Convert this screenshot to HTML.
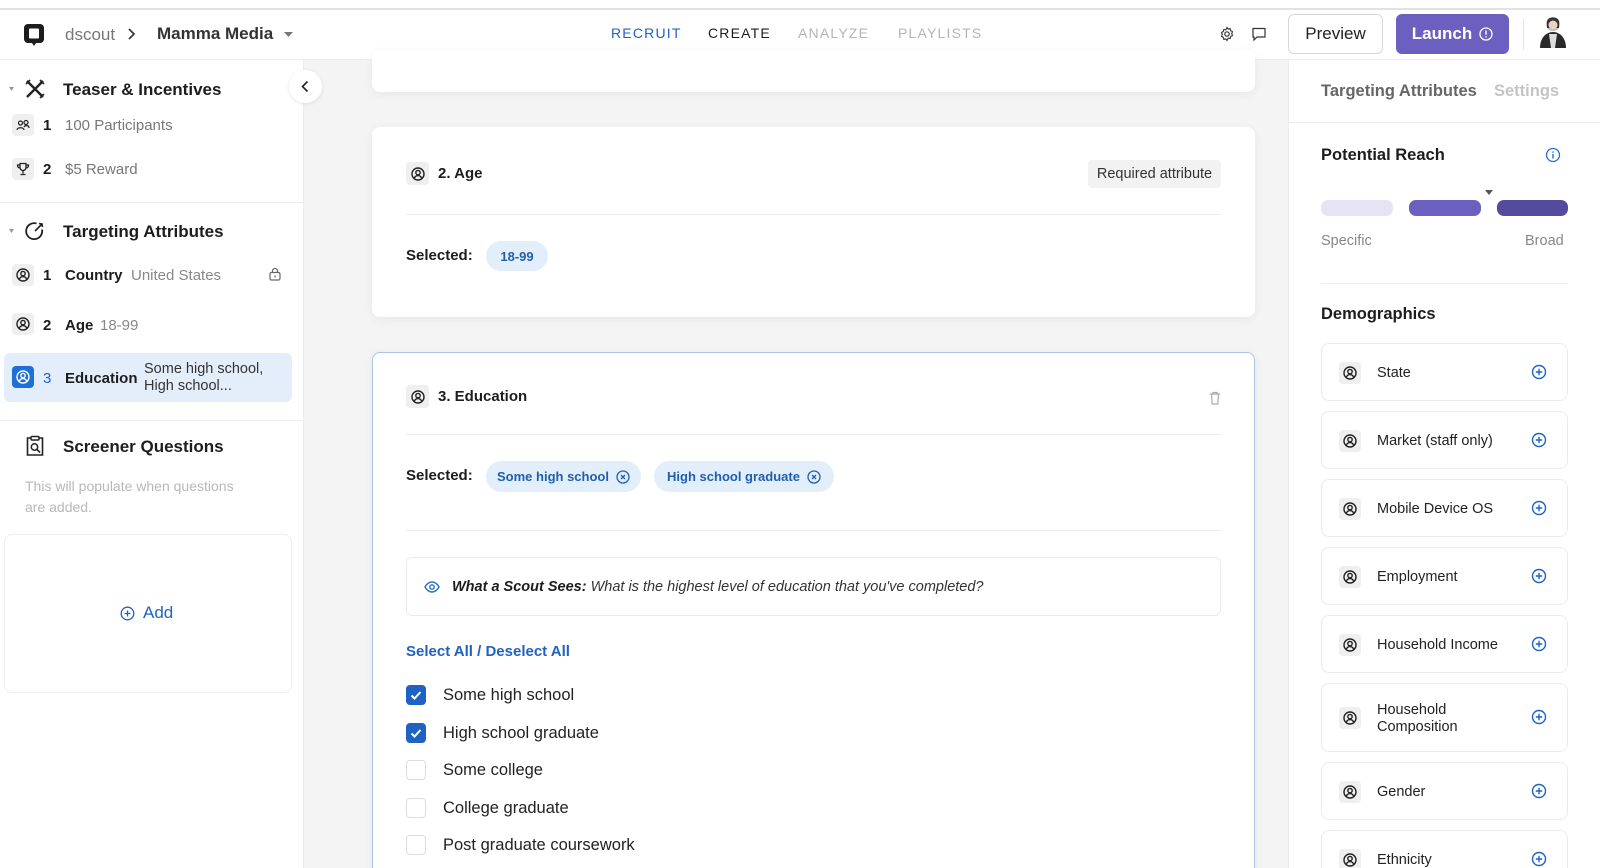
<!DOCTYPE html>
<html><head><meta charset="utf-8"><style>
*{box-sizing:border-box;margin:0;padding:0}
html,body{width:1600px;height:868px;overflow:hidden}
body{background:#f4f4f5;font-family:"Liberation Sans",Arial,sans-serif;color:#1d1d1f}
#r{position:relative;width:1600px;height:868px;overflow:hidden;background:#f4f4f5}
.a{position:absolute}
.hdr{left:0;width:1600px;background:#fff;border-top:2px solid #e2e2e2;border-bottom:1px solid #ececec;top:8px;height:52px}
.topstrip{left:0;top:0;width:1600px;height:8px;background:#fff}
.nav{font-size:14px;letter-spacing:1.2px;top:25px}
.side{left:0;top:60px;width:304px;height:830px;background:#fff;border-right:1px solid #ececec}
.right{left:1288px;top:60px;width:312px;height:830px;background:#fff;border-left:1px solid #ececec}
.card{background:#fff;border-radius:8px;box-shadow:0 2px 10px rgba(0,0,0,.06)}
.ib{width:22px;height:22px;border-radius:4px;background:#efefef;display:flex;align-items:center;justify-content:center}
.t15{font-size:15px}
.chip{background:#e3eefb;color:#1f5fae;border-radius:16px;font-size:13px;font-weight:bold;display:flex;align-items:center;justify-content:center;gap:7px}
.dc{left:1321px;width:247px;height:58px;border:1px solid #ececec;border-radius:8px;background:#fff}
.dc .ib{position:absolute;left:17px;top:18px}
.dc span{position:absolute;left:55px;font-size:14.5px;color:#222}
.dc svg.p{position:absolute;right:20px;top:20px}
.cb{width:20px;height:20px;border-radius:4px;border:1px solid #dcdcdc;left:406px;background:#fff}
.cb.on{background:#1f62c4;border-color:#1f62c4}
.cl{left:443px;font-size:16.5px;color:#222}
</style></head><body><div id="r">
<svg width="0" height="0" style="position:absolute"><defs>
<g id="u"><circle cx="7" cy="7" r="6" fill="none" stroke="#222" stroke-width="1.4"/><circle cx="7" cy="5.6" r="2.2" fill="none" stroke="#222" stroke-width="1.4"/><path d="M3.2 11.2c1-1.8 2.3-2.6 3.8-2.6s2.8.8 3.8 2.6" fill="none" stroke="#222" stroke-width="1.4"/></g>
<g id="pl"><circle cx="8" cy="8" r="6.5" fill="none" stroke="#1f62c4" stroke-width="1.4"/><path d="M8 4.8v6.4M4.8 8h6.4" stroke="#1f62c4" stroke-width="1.4"/></g>
</defs></svg>
<div class="a topstrip"></div>
<div class="a hdr"></div>
<svg class="a" style="left:23px;top:23px" width="22" height="24" viewBox="0 0 22 24"><rect x="1" y="1" width="20" height="19" rx="4" fill="#1d1d1f"/><rect x="6" y="5.5" width="10" height="10" rx="1" fill="#fff"/><path d="M9 20l2 3 2-3z" fill="#1d1d1f"/></svg>
<div class="a" style="left:65px;top:25px;font-size:17px;color:#777">dscout</div>
<svg class="a" style="left:127px;top:28px" width="10" height="12"><path d="M2 1l5 5-5 5" fill="none" stroke="#333" stroke-width="1.6"/></svg>
<div class="a" style="left:157px;top:24px;font-size:17px;font-weight:bold;color:#333">Mamma Media</div>
<svg class="a" style="left:284px;top:32px" width="10" height="6"><path d="M0 0h9L4.5 5z" fill="#777"/></svg>
<div class="a nav" style="left:611px;color:#1f62c4">RECRUIT</div>
<div class="a" style="left:611px;top:56px;width:68px;height:3px;background:#2a6fc9;border-radius:1px"></div>
<div class="a nav" style="left:708px;color:#1d1d1f">CREATE</div>
<div class="a nav" style="left:798px;color:#b5b5b5">ANALYZE</div>
<div class="a nav" style="left:898px;color:#b5b5b5">PLAYLISTS</div>
<svg class="a" style="left:1219px;top:26px" width="16" height="16" viewBox="0 0 16 16"><circle cx="8" cy="8" r="2.2" fill="none" stroke="#333" stroke-width="1.2"/><path d="M8 1.5l1.2 1.6 2-.4.5 2 1.8 1-.8 1.9.8 1.9-1.8 1-.5 2-2-.4L8 14.5l-1.2-1.6-2 .4-.5-2-1.8-1 .8-1.9-.8-1.9 1.8-1 .5-2 2 .4z" fill="none" stroke="#333" stroke-width="1.1"/></svg>
<svg class="a" style="left:1251px;top:26px" width="16" height="16" viewBox="0 0 16 16"><path d="M2 2.5h12v8.5H6l-3 3v-3H2z" fill="none" stroke="#333" stroke-width="1.2"/></svg>
<div class="a" style="left:1288px;top:14px;width:95px;height:40px;border:1px solid #d8d8d8;border-radius:6px;display:flex;align-items:center;justify-content:center;font-size:17px;color:#222">Preview</div>
<div class="a" style="left:1396px;top:14px;width:113px;height:40px;background:#6b5fbf;border-radius:6px;display:flex;align-items:center;justify-content:center;gap:7px;font-size:17px;color:#fff;font-weight:bold">Launch <svg width="14" height="14"><circle cx="7" cy="7" r="6" fill="none" stroke="#fff" stroke-width="1.3"/><path d="M7 3.5v4.2M7 9.3v1.2" stroke="#fff" stroke-width="1.4"/></svg></div>
<div class="a" style="left:1523px;top:18px;width:1px;height:32px;background:#e6e6e6"></div>
<svg class="a" style="left:1537px;top:14px" width="32" height="36" viewBox="0 0 32 36"><circle cx="16" cy="10" r="7" fill="#bbb"/><path d="M10 8c0-6 12-6 12 0v6H10z" fill="#333"/><circle cx="16" cy="11" r="4.5" fill="#e9d3c4"/><path d="M3 34c0-10 6-16 13-16s13 6 13 16z" fill="#2a2a2a"/><path d="M12 20h8l-2 14h-4z" fill="#ddd"/></svg>

<div class="a side"></div>
<svg class="a" style="left:9px;top:87px" width="6" height="5"><path d="M0 0h5L2.5 4z" fill="#999"/></svg>
<svg class="a" style="left:24px;top:78px" width="22" height="22" viewBox="0 0 22 22"><path d="M3 3l16 16M19 3L3 19" stroke="#222" stroke-width="2.4"/><path d="M2 6l4-4M16 20l4-4M16 2l4 4" stroke="#222" stroke-width="1.6"/></svg>
<div class="a" style="left:63px;top:80px;font-size:17px;font-weight:bold">Teaser &amp; Incentives</div>
<div class="a ib" style="left:12px;top:114px"><svg width="14" height="12"><circle cx="4.5" cy="4" r="2" fill="none" stroke="#222" stroke-width="1.2"/><circle cx="10" cy="3.5" r="2" fill="none" stroke="#222" stroke-width="1.2"/><path d="M1 11c0-3 7-3 7 0M8 8c1-2 5-2 5 1" fill="none" stroke="#222" stroke-width="1.2"/></svg></div>
<div class="a t15" style="left:43px;top:117px;font-weight:bold">1</div>
<div class="a t15" style="left:65px;top:117px;color:#777">100 Participants</div>
<div class="a ib" style="left:12px;top:158px"><svg width="14" height="14"><path d="M4 1.5h6v4a3 3 0 0 1-6 0zM4 3H1.5c0 2 1 3 2.5 3M10 3h2.5c0 2-1 3-2.5 3M7 8.5v3M4.5 12.5h5" fill="none" stroke="#222" stroke-width="1.3"/></svg></div>
<div class="a t15" style="left:43px;top:161px;font-weight:bold">2</div>
<div class="a t15" style="left:65px;top:161px;color:#777">$5 Reward</div>
<div class="a" style="left:0;top:202px;width:304px;height:1px;background:#ececec"></div>
<svg class="a" style="left:9px;top:229px" width="6" height="5"><path d="M0 0h5L2.5 4z" fill="#999"/></svg>
<svg class="a" style="left:24px;top:220px" width="22" height="22" viewBox="0 0 22 22"><path d="M18 9.5A8 8 0 1 1 12.5 3.5" fill="none" stroke="#222" stroke-width="1.8"/><path d="M11 11l7-7M15 3.5l3 .5.5 3" fill="none" stroke="#222" stroke-width="1.6"/></svg>
<div class="a" style="left:63px;top:222px;font-size:17px;font-weight:bold">Targeting Attributes</div>
<div class="a ib" style="left:12px;top:264px"><svg width="14" height="14"><use href="#u"/></svg></div>
<div class="a t15" style="left:43px;top:267px;font-weight:bold">1</div>
<div class="a t15" style="left:65px;top:267px;font-weight:bold">Country</div>
<div class="a t15" style="left:131px;top:267px;color:#888">United States</div>
<svg class="a" style="left:269px;top:267px" width="12" height="14"><rect x="1" y="5.5" width="10" height="7.5" rx="1.5" fill="none" stroke="#666" stroke-width="1.2"/><path d="M3.5 5.5V4a2.5 2.5 0 0 1 5 0v1.5M6 8.5v2" fill="none" stroke="#666" stroke-width="1.2"/></svg>
<div class="a ib" style="left:12px;top:313px"><svg width="14" height="14"><use href="#u"/></svg></div>
<div class="a t15" style="left:43px;top:317px;font-weight:bold">2</div>
<div class="a t15" style="left:65px;top:317px;font-weight:bold">Age</div>
<div class="a t15" style="left:100px;top:317px;color:#888">18-99</div>
<div class="a" style="left:4px;top:353px;width:288px;height:49px;background:#e4eefb;border-radius:6px"></div>
<div class="a ib" style="left:12px;top:366px;background:#1f6fd6"><svg width="14" height="14"><circle cx="7" cy="7" r="6" fill="none" stroke="#fff" stroke-width="1.4"/><circle cx="7" cy="5.6" r="2.2" fill="#1f6fd6" stroke="#fff" stroke-width="1.4"/><path d="M3.2 11.2c1-1.8 2.3-2.6 3.8-2.6s2.8.8 3.8 2.6" fill="#1f6fd6" stroke="#fff" stroke-width="1.4"/></svg></div>
<div class="a t15" style="left:43px;top:370px;color:#1f62c4">3</div>
<div class="a t15" style="left:65px;top:370px;font-weight:bold">Education</div>
<div class="a" style="left:144px;top:361px;font-size:14.5px;line-height:17px;color:#333">Some high school,<br>High school...</div>
<div class="a" style="left:0;top:420px;width:304px;height:1px;background:#ececec"></div>
<svg class="a" style="left:25px;top:435px" width="20" height="22" viewBox="0 0 20 22"><path d="M6 3H2.5v17h15V3H14" fill="none" stroke="#222" stroke-width="1.6"/><rect x="6" y="1.5" width="8" height="3.5" rx="1" fill="none" stroke="#222" stroke-width="1.5"/><circle cx="9.5" cy="12" r="3.2" fill="none" stroke="#222" stroke-width="1.5"/><path d="M12 14.5l3 3" stroke="#222" stroke-width="1.6"/></svg>
<div class="a" style="left:63px;top:437px;font-size:17px;font-weight:bold">Screener Questions</div>
<div class="a" style="left:25px;top:476px;font-size:14px;line-height:21px;color:#b8b8b8">This will populate when questions<br>are added.</div>
<div class="a" style="left:4px;top:534px;width:288px;height:159px;border:1px solid #eee;border-radius:8px;background:#fff"></div>
<div class="a" style="left:120px;top:603px;font-size:17px;color:#1f62c4;display:flex;align-items:center;gap:8px"><svg width="15" height="15"><circle cx="7.5" cy="7.5" r="6.3" fill="none" stroke="#1f62c4" stroke-width="1.3"/><path d="M7.5 4.5v6M4.5 7.5h6" stroke="#1f62c4" stroke-width="1.3"/></svg>Add</div>
<div class="a" style="left:289px;top:70px;width:33px;height:33px;border-radius:50%;background:#fff;box-shadow:0 1px 4px rgba(0,0,0,.1)"></div>
<svg class="a" style="left:301px;top:80px" width="8" height="13"><path d="M6.5 1.5L1.5 6.5l5 5" fill="none" stroke="#222" stroke-width="1.6"/></svg>

<div class="a card" style="left:372px;top:50px;width:883px;height:42px"></div>
<div class="a card" style="left:372px;top:127px;width:883px;height:190px"></div>
<div class="a ib" style="left:406px;top:162px;width:23px;height:23px"><svg width="14" height="14"><use href="#u"/></svg></div>
<div class="a" style="left:438px;top:165px;font-size:15px;font-weight:bold">2. Age</div>
<div class="a" style="left:1088px;top:160px;width:133px;height:28px;background:#f2f2f2;border-radius:4px;font-size:14.5px;color:#333;display:flex;align-items:center;justify-content:center">Required attribute</div>
<div class="a" style="left:406px;top:214px;width:815px;height:1px;background:#ececec"></div>
<div class="a" style="left:406px;top:247px;font-size:15px;font-weight:bold">Selected:</div>
<div class="a chip" style="left:486px;top:241px;width:62px;height:30px">18-99</div>

<div class="a card" style="left:372px;top:352px;width:883px;height:560px;border:1px solid #a9c6e8"></div>
<div class="a ib" style="left:406px;top:385px;width:23px;height:23px"><svg width="14" height="14"><use href="#u"/></svg></div>
<div class="a" style="left:438px;top:388px;font-size:15px;font-weight:bold">3. Education</div>
<svg class="a" style="left:1209px;top:391px" width="12" height="14"><path d="M1 3h10M4 3V1.5h4V3M2.5 3l.7 10h5.6l.7-10" fill="none" stroke="#aaa" stroke-width="1.2"/></svg>
<div class="a" style="left:406px;top:434px;width:815px;height:1px;background:#ececec"></div>
<div class="a" style="left:406px;top:467px;font-size:15px;font-weight:bold">Selected:</div>
<div class="a chip" style="left:486px;top:461px;width:155px;height:31px">Some high school <svg width="14" height="14"><circle cx="7" cy="7" r="6" fill="none" stroke="#1f5fae" stroke-width="1.3"/><path d="M5 5l4 4M9 5l-4 4" stroke="#1f5fae" stroke-width="1.3"/></svg></div>
<div class="a chip" style="left:654px;top:461px;width:180px;height:31px">High school graduate <svg width="14" height="14"><circle cx="7" cy="7" r="6" fill="none" stroke="#1f5fae" stroke-width="1.3"/><path d="M5 5l4 4M9 5l-4 4" stroke="#1f5fae" stroke-width="1.3"/></svg></div>
<div class="a" style="left:406px;top:530px;width:815px;height:1px;background:#ececec"></div>
<div class="a" style="left:406px;top:557px;width:815px;height:59px;border:1px solid #ececec;border-radius:6px"></div>
<svg class="a" style="left:424px;top:580px" width="16" height="14"><path d="M1 7c2-3.5 4.5-5 7-5s5 1.5 7 5c-2 3.5-4.5 5-7 5s-5-1.5-7-5z" fill="none" stroke="#2a6fc9" stroke-width="1.4"/><circle cx="8" cy="7" r="2.2" fill="none" stroke="#2a6fc9" stroke-width="1.4"/></svg>
<div class="a" style="left:452px;top:579px;font-size:14.5px;font-style:italic;color:#333"><b style="color:#1d1d1f">What a Scout Sees:</b> What is the highest level of education that you've completed?</div>
<div class="a" style="left:406px;top:643px;font-size:15px;font-weight:bold;color:#1f62c4">Select All / Deselect All</div>
<div class="a cb on" style="top:685px"><svg width="18" height="18"><path d="M4.5 9.5l3 3 6-6.5" fill="none" stroke="#fff" stroke-width="2"/></svg></div>
<div class="a cl" style="top:686px">Some high school</div>
<div class="a cb on" style="top:723px"><svg width="18" height="18"><path d="M4.5 9.5l3 3 6-6.5" fill="none" stroke="#fff" stroke-width="2"/></svg></div>
<div class="a cl" style="top:724px">High school graduate</div>
<div class="a cb" style="top:760px"></div>
<div class="a cl" style="top:761px">Some college</div>
<div class="a cb" style="top:798px"></div>
<div class="a cl" style="top:799px">College graduate</div>
<div class="a cb" style="top:835px"></div>
<div class="a cl" style="top:836px">Post graduate coursework</div>

<div class="a right"></div>
<div class="a" style="left:1321px;top:82px;font-size:16.5px;color:#666;font-weight:bold">Targeting Attributes</div>
<div class="a" style="left:1494px;top:82px;font-size:16.5px;color:#c4c4c4;font-weight:bold">Settings</div>
<div class="a" style="left:1288px;top:122px;width:312px;height:1px;background:#ececec"></div>
<div class="a" style="left:1321px;top:146px;font-size:16.5px;font-weight:bold;color:#1d1d1f">Potential Reach</div>
<svg class="a" style="left:1545px;top:147px" width="16" height="16"><circle cx="8" cy="8" r="6.5" fill="none" stroke="#2a6fc9" stroke-width="1.3"/><path d="M8 7v4.5M8 4.5v1.2" stroke="#2a6fc9" stroke-width="1.4"/></svg>
<svg class="a" style="left:1485px;top:190px" width="9" height="6"><path d="M0 0h8L4 5z" fill="#555"/></svg>
<div class="a" style="left:1321px;top:200px;width:72px;height:16px;border-radius:7px;background:#e6e4f3"></div>
<div class="a" style="left:1409px;top:200px;width:72px;height:16px;border-radius:7px;background:#6b5fbf"></div>
<div class="a" style="left:1497px;top:200px;width:71px;height:16px;border-radius:7px;background:#544a9e"></div>
<div class="a" style="left:1321px;top:233px;font-size:14.5px;color:#888">Specific</div>
<div class="a" style="left:1525px;top:233px;font-size:14.5px;color:#888">Broad</div>
<div class="a" style="left:1321px;top:283px;width:247px;height:1px;background:#ececec"></div>
<div class="a" style="left:1321px;top:305px;font-size:16.5px;font-weight:bold;color:#1d1d1f">Demographics</div>

<div class="a dc" style="top:343px"><div class="ib"><svg width="14" height="14"><use href="#u"/></svg></div><span style="top:21px">State</span><svg class="p" width="16" height="16"><use href="#pl"/></svg></div>
<div class="a dc" style="top:411px"><div class="ib"><svg width="14" height="14"><use href="#u"/></svg></div><span style="top:21px">Market (staff only)</span><svg class="p" width="16" height="16"><use href="#pl"/></svg></div>
<div class="a dc" style="top:479px"><div class="ib"><svg width="14" height="14"><use href="#u"/></svg></div><span style="top:21px">Mobile Device OS</span><svg class="p" width="16" height="16"><use href="#pl"/></svg></div>
<div class="a dc" style="top:547px"><div class="ib"><svg width="14" height="14"><use href="#u"/></svg></div><span style="top:21px">Employment</span><svg class="p" width="16" height="16"><use href="#pl"/></svg></div>
<div class="a dc" style="top:615px"><div class="ib"><svg width="14" height="14"><use href="#u"/></svg></div><span style="top:21px">Household Income</span><svg class="p" width="16" height="16"><use href="#pl"/></svg></div>
<div class="a dc" style="top:683px;height:69px"><div class="ib" style="top:23px"><svg width="14" height="14"><use href="#u"/></svg></div><span style="top:18px;line-height:17px">Household<br>Composition</span><svg class="p" width="16" height="16" style="top:25px"><use href="#pl"/></svg></div>
<div class="a dc" style="top:762px"><div class="ib"><svg width="14" height="14"><use href="#u"/></svg></div><span style="top:21px">Gender</span><svg class="p" width="16" height="16"><use href="#pl"/></svg></div>
<div class="a dc" style="top:830px"><div class="ib"><svg width="14" height="14"><use href="#u"/></svg></div><span style="top:21px">Ethnicity</span><svg class="p" width="16" height="16"><use href="#pl"/></svg></div>
</div></body></html>
